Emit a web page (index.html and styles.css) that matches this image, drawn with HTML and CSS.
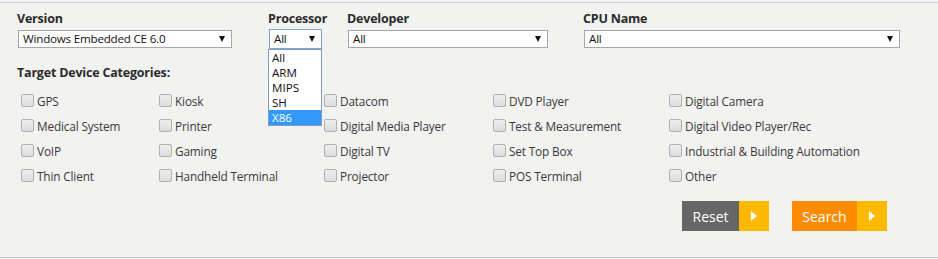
FILE: index.html
```html
<!DOCTYPE html>
<html>
<head>
<meta charset="utf-8">
<link rel="stylesheet" href="styles.css">
</head>
<body>
<div class="panel">
  <div class="filters">
    <div class="field f-version">
      <div class="label">Version</div>
      <div class="select"><span>Windows Embedded CE 6.0</span><span class="arrow"></span></div>
    </div>
    <div class="field f-processor">
      <div class="label">Processor</div>
      <div class="select focused"><span>All</span><span class="arrow"></span></div>
      <ul class="dropdown">
        <li>All</li>
        <li>ARM</li>
        <li>MIPS</li>
        <li>SH</li>
        <li class="active">X86</li>
      </ul>
    </div>
    <div class="field f-developer">
      <div class="label">Developer</div>
      <div class="select"><span>All</span><span class="arrow"></span></div>
    </div>
    <div class="field f-cpu">
      <div class="label">CPU Name</div>
      <div class="select"><span>All</span><span class="arrow"></span></div>
    </div>
  </div>

  <div class="heading">Target Device Categories:</div>

  <div class="grid">
    <label class="cb"><span class="box"></span>GPS</label>
    <label class="cb"><span class="box"></span>Kiosk</label>
    <label class="cb"><span class="box"></span>Datacom</label>
    <label class="cb"><span class="box"></span>DVD Player</label>
    <label class="cb"><span class="box"></span>Digital Camera</label>

    <label class="cb"><span class="box"></span>Medical System</label>
    <label class="cb"><span class="box"></span>Printer</label>
    <label class="cb"><span class="box"></span>Digital Media Player</label>
    <label class="cb"><span class="box"></span>Test &amp; Measurement</label>
    <label class="cb"><span class="box"></span>Digital Video Player/Rec</label>

    <label class="cb"><span class="box"></span>VoIP</label>
    <label class="cb"><span class="box"></span>Gaming</label>
    <label class="cb"><span class="box"></span>Digital TV</label>
    <label class="cb"><span class="box"></span>Set Top Box</label>
    <label class="cb"><span class="box"></span>Industrial &amp; Building Automation</label>

    <label class="cb"><span class="box"></span>Thin Client</label>
    <label class="cb"><span class="box"></span>Handheld Terminal</label>
    <label class="cb"><span class="box"></span>Projector</label>
    <label class="cb"><span class="box"></span>POS Terminal</label>
    <label class="cb"><span class="box"></span>Other</label>
  </div>

  <div class="actions">
    <button class="btn btn-reset"><span class="btn-text">Reset</span><span class="btn-arrow"></span></button>
    <button class="btn btn-search"><span class="btn-text">Search</span><span class="btn-arrow"></span></button>
  </div>
</div>
</body>
</html>
```

FILE: styles.css
```css
html, body {
  margin: 0;
  padding: 0;
  background: #f2f2f1;
}

body {
  font-family: "Open Sans", "Noto Sans", sans-serif;
  color: #333;
}

.panel {
  margin-top: 2px;
  height: 256px;
  box-sizing: border-box;
  border-top: 1px solid #d0d0d0;
  border-bottom: 1px solid #c8c8c8;
  padding: 7px 0 0 17px;
}

.filters {
  display: flex;
  align-items: flex-start;
}

.field {
  position: relative;
}

.f-version { width: 215px; margin-right: 36px; }
.f-processor { width: 54px; margin-right: 25px; }
.f-developer { width: 201px; margin-right: 35px; }
.f-cpu { width: 317px; }

.label {
  font-size: 12.5px;
  font-weight: 700;
  line-height: 17px;
  height: 17px;
  color: #2b2b2b;
  margin-bottom: 3px;
  letter-spacing: -0.2px;
}

.select {
  margin-left: 1px;
  height: 18px;
  box-sizing: border-box;
  border: 1px solid #a6a6a6;
  background: #fff;
  display: flex;
  align-items: center;
  justify-content: space-between;
  padding: 0 6px 0 4px;
  font-size: 11.6px;
  color: #111;
  letter-spacing: -0.2px;
  line-height: 16px;
}

.select.focused {
  height: 20px;
  margin-top: -1px;
  border-color: #7ea6d8;
}

.arrow {
  width: 0;
  height: 0;
  border-left: 3.5px solid transparent;
  border-right: 3.5px solid transparent;
  border-top: 6px solid #111;
}

.dropdown {
  position: absolute;
  left: 0;
  top: 39px;
  width: 54px;
  box-sizing: border-box;
  margin: 0;
  padding: 0;
  list-style: none;
  background: #fff;
  border: 1px solid #7f9db9;
  font-size: 11.6px;
  line-height: 15px;
  color: #111;
  z-index: 5;
}

.dropdown li {
  padding-left: 3px;
  height: 15px;
}

.dropdown li.active {
  background: #3399ff;
  color: #fff;
}

.heading {
  margin-top: 15px;
  font-size: 12.5px;
  font-weight: 700;
  line-height: 17px;
  color: #2b2b2b;
  letter-spacing: -0.2px;
}

.grid {
  margin-top: 12px;
  margin-left: 4px;
  display: grid;
  grid-template-columns: 138px 165px 169px 176px 240px;
  grid-auto-rows: 25px;
}

.cb {
  display: flex;
  align-items: center;
  height: 15px;
  font-size: 11.8px;
  color: #3a3a3a;
  letter-spacing: -0.15px;
  white-space: nowrap;
}

.box {
  width: 13px;
  height: 13px;
  box-sizing: border-box;
  border: 1px solid #b0b0b0;
  border-radius: 2px;
  background: linear-gradient(#eeeeee, #dcdcdc);
  margin-right: 3px;
  flex: none;
}

.actions {
  display: flex;
  justify-content: flex-end;
  padding-right: 51px;
  margin-top: 8px;
}

.btn {
  display: flex;
  height: 30px;
  border: 0;
  padding: 0;
  margin: 0 0 0 23px;
  font-family: inherit;
  font-size: 14px;
  color: #fff;
  cursor: pointer;
}

.btn-text {
  display: flex;
  align-items: center;
  justify-content: center;
  height: 30px;
}

.btn-reset .btn-text { width: 57px; background: #666666; }
.btn-search .btn-text { width: 65px; background: #ff8c00; }

.btn-arrow {
  width: 30px;
  height: 30px;
  background: #ffb900;
  display: flex;
  align-items: center;
  justify-content: center;
}

.btn-arrow::before {
  content: "";
  width: 0;
  height: 0;
  border-top: 5px solid transparent;
  border-bottom: 5px solid transparent;
  border-left: 6px solid #fff;
}
```
